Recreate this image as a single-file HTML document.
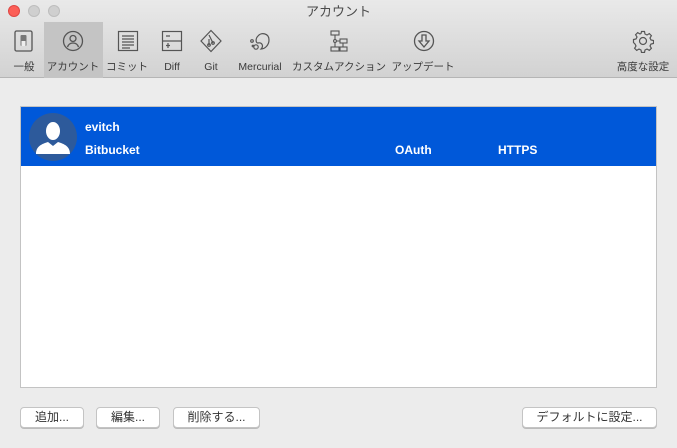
<!DOCTYPE html>
<html><head><meta charset="utf-8"><style>
*{margin:0;padding:0;box-sizing:border-box}
body{width:677px;height:448px;overflow:hidden;background:#ececec;font-family:"Liberation Sans","Noto Sans CJK JP",sans-serif;position:relative}
.tb{position:absolute;left:0;top:0;width:677px;height:78px;background:linear-gradient(#e9e9e9,#d2d2d2);border-bottom:1px solid #b5b5b5}
.title{position:absolute;top:3px;width:100%;text-align:center;font-size:13px;line-height:17px;color:#4a4a4a}
.dot{position:absolute;top:5px;width:12px;height:12px;border-radius:50%;background:#cfcfcf;border:1px solid #bdbdbd}
.sel{position:absolute;left:44px;top:22px;width:59px;height:56px;background:#c4c4c4}
.lbl{position:absolute;top:60px;height:14px;line-height:14px;font-size:10.5px;color:#3a3a3a;transform:translateX(-50%);white-space:nowrap}
svg.i{position:absolute;top:29px}
.list{position:absolute;left:20px;top:106px;width:637px;height:282px;background:#fff;border:1px solid #c3c3c3}
.row{position:absolute;left:0;top:0;width:635px;height:59px;background:#0058d9;color:#fff;font-weight:bold;font-size:12px}
.row span{position:absolute;line-height:14px}
.btn{position:absolute;top:407px;height:21px;background:#fff;border:1px solid #c4c4c4;border-radius:4px;font-size:12px;color:#333;text-align:center;line-height:19px;box-shadow:0 1px 0 #bbb}
</style></head><body>
<div class="tb">
<div class="dot" style="left:8px;background:#fc5f57;border-color:#df4744"></div>
<div class="dot" style="left:28px"></div>
<div class="dot" style="left:48px"></div>
<div class="title">アカウント</div>
<div class="sel"></div>
<svg class="i" style="left:13px" width="22" height="24" viewBox="0 0 22 24" fill="none" stroke="#555" stroke-width="1.3"><rect x="2" y="2" width="17" height="20" rx="1.5"/><rect x="7.5" y="6" width="6" height="11" rx="1" fill="#777" stroke="none"/><rect x="8.5" y="12" width="4" height="5" fill="#eee" stroke="none"/></svg>
<svg class="i" style="left:62px" width="22" height="24" viewBox="0 0 22 24" fill="none" stroke="#555" stroke-width="1.3"><circle cx="11" cy="12" r="9.5"/><circle cx="11" cy="9.5" r="3"/><path d="M5.5 18c1-3 3-4 5.5-4s4.5 1 5.5 4"/></svg>
<svg class="i" style="left:117px" width="22" height="24" viewBox="0 0 22 24" fill="none" stroke="#555" stroke-width="1.2"><rect x="1.5" y="2.5" width="19" height="19"/><path d="M5 7h12M5 10h12M5 13h12M5 16h12M5 19h8"/></svg>
<svg class="i" style="left:161px" width="22" height="24" viewBox="0 0 22 24" fill="none" stroke="#555" stroke-width="1.2"><rect x="1.5" y="2.5" width="19" height="19"/><path d="M1.5 12h19M5 7h4M7 14v5M5 16.5h4"/></svg>
<svg class="i" style="left:200px" width="22" height="24" viewBox="0 0 22 24" fill="none" stroke="#555" stroke-width="1.2"><path d="M11 1.5L21 12 11 22.5 1 12z"/><path d="M9 6l4 8M9 10v6" /><circle cx="9" cy="16" r="1.3"/><circle cx="13" cy="14" r="1.3"/></svg>
<svg class="i" style="left:249px" width="22" height="24" viewBox="0 0 22 24" fill="none" stroke="#555" stroke-width="1.2"><path d="M9 7c3-4 11-3 11 4 0 5-4 9-8 9 3-3 1-7-3-6-2 .5-3-4 0-7z"/><circle cx="7" cy="18" r="2.2"/><circle cx="3" cy="12" r="1.3"/><circle cx="4" cy="17" r=".8"/></svg>
<svg class="i" style="left:328px" width="22" height="24" viewBox="0 0 22 24" fill="none" stroke="#555" stroke-width="1.1"><rect x="3" y="2" width="8" height="4"/><rect x="12" y="10" width="7" height="4"/><rect x="3" y="18" width="8" height="4"/><rect x="12" y="18" width="7" height="4"/><path d="M7 6v12M7 12h5M15 14v4"/><circle cx="7" cy="12" r="1.4" fill="#eee"/></svg>
<svg class="i" style="left:413px" width="22" height="24" viewBox="0 0 22 24" fill="none" stroke="#555" stroke-width="1.3"><circle cx="11" cy="12" r="9.5"/><path d="M9 6h4v6h3l-5 6-5-6h3z"/></svg>
<svg class="i" style="left:632px" width="22" height="24" viewBox="0 0 22 24" fill="none" stroke="#555" stroke-width="1.2"><path d="M9.5 2.5h3l.5 2.5 2 1 2.3-1.4 2.1 2.1-1.4 2.3 1 2 2.5.5v3l-2.5.5-1 2 1.4 2.3-2.1 2.1-2.3-1.4-2 1-.5 2.5h-3l-.5-2.5-2-1-2.3 1.4-2.1-2.1 1.4-2.3-1-2L1.5 13.5v-3L4 10l1-2-1.4-2.3 2.1-2.1L8 5l1-.5z"/><circle cx="11" cy="12" r="3.5"/></svg>
<div class="lbl" style="left:24px">一般</div>
<div class="lbl" style="left:73px">アカウント</div>
<div class="lbl" style="left:127px">コミット</div>
<div class="lbl" style="left:172px">Diff</div>
<div class="lbl" style="left:211px">Git</div>
<div class="lbl" style="left:260px">Mercurial</div>
<div class="lbl" style="left:339px">カスタムアクション</div>
<div class="lbl" style="left:423px">アップデート</div>
<div class="lbl" style="left:643px">高度な設定</div>
</div>
<div class="list"><div class="row">
<svg style="position:absolute;left:8px;top:6px" width="48" height="48" viewBox="0 0 48 48"><circle cx="24" cy="24" r="24" fill="#2d5a9b"/><ellipse cx="24" cy="18" rx="7" ry="9" fill="#fff"/><path d="M7 41c0-8 6-10 12-12l5 4 5-4c6 2 12 4 12 12z" fill="#fff"/></svg>
<span style="left:64px;top:13px">evitch</span>
<span style="left:64px;top:36px">Bitbucket</span>
<span style="left:374px;top:36px">OAuth</span>
<span style="left:477px;top:36px">HTTPS</span>
</div></div>
<div class="btn" style="left:20px;width:64px">追加...</div>
<div class="btn" style="left:96px;width:64px">編集...</div>
<div class="btn" style="left:173px;width:87px">削除する...</div>
<div class="btn" style="left:522px;width:135px">デフォルトに設定...</div>
</body></html>
